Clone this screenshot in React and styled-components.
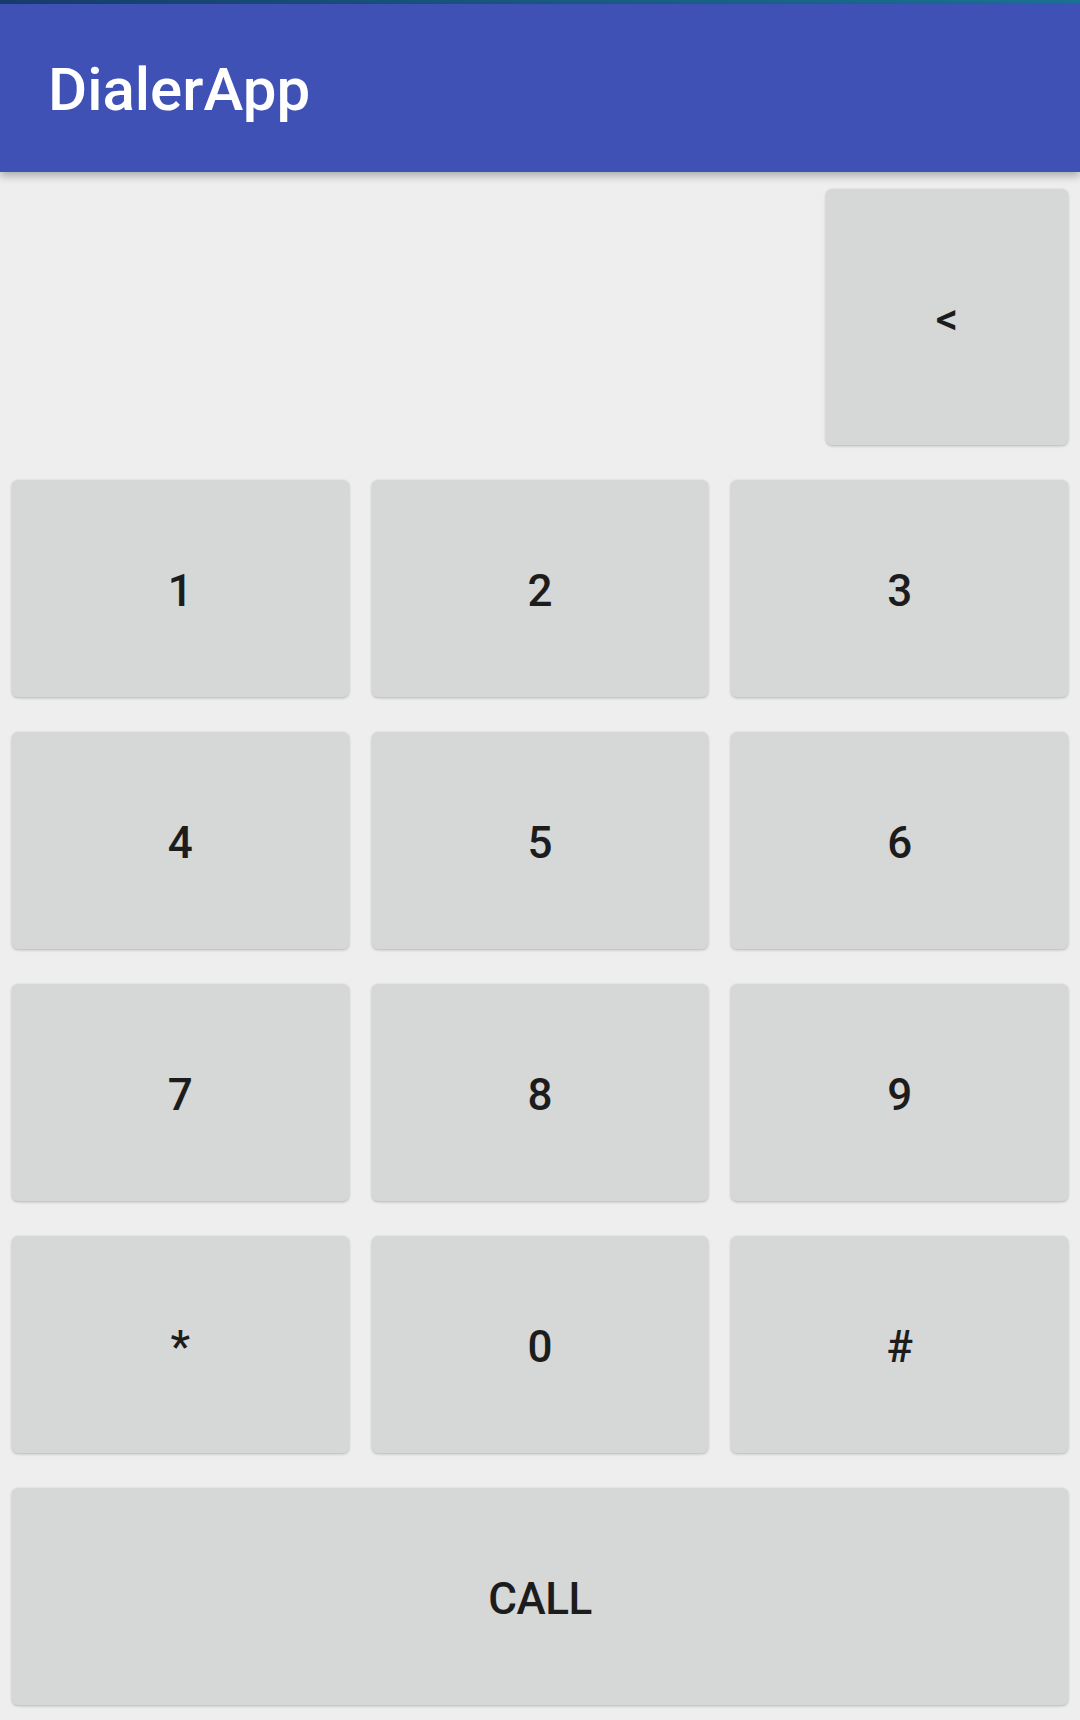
import React from 'react';
import styled, { createGlobalStyle } from 'styled-components';

const GlobalStyle = createGlobalStyle`
  html, body {
    margin: 0;
    padding: 0;
    background: #eeeeee;
    font-family: Roboto, 'Noto Sans', sans-serif;
  }
`;

const Screen = styled.div`
  width: 1080px;
  min-height: 1720px;
  background: #eeeeee;
  display: flex;
  flex-direction: column;
`;

const StatusStrip = styled.div`
  height: 4px;
  background: linear-gradient(90deg, #173d6e 0%, #1a5c86 55%, #1a7396 100%);
`;

const AppBar = styled.header`
  height: 168px;
  background: #3f51b5;
  display: flex;
  align-items: center;
  padding-left: 48px;
  padding-top: 2px;
  box-sizing: border-box;
  box-shadow: 0 4px 8px rgba(0, 0, 0, 0.28);
  position: relative;
  z-index: 1;
`;

const Title = styled.h1`
  margin: 0;
  color: #ffffff;
  font-size: 60px;
  font-weight: 500;
`;

const Body = styled.main`
  padding: 17px 12px 15px;
  display: flex;
  flex-direction: column;
  gap: 35px;
`;

const DisplayRow = styled.div`
  display: flex;
  justify-content: flex-end;
`;

const Pad = styled.div`
  display: grid;
  grid-template-columns: repeat(3, 1fr);
  grid-auto-rows: 217px;
  column-gap: 23px;
  row-gap: 35px;
`;

const Key = styled.button`
  border: none;
  border-radius: 6px;
  background: #d6d7d7;
  box-shadow: 0 1px 3px rgba(0, 0, 0, 0.25);
  color: #1c1c1c;
  font-family: Roboto, 'Noto Sans', sans-serif;
  font-size: 44px;
  font-weight: 500;
  display: flex;
  align-items: center;
  justify-content: center;
  padding: 4px 0 0;
  width: ${(p) => p.$width || 'auto'};
  height: ${(p) => p.$height || 'auto'};
  grid-column: ${(p) => (p.$wide ? '1 / -1' : 'auto')};
  letter-spacing: ${(p) => (p.$wide ? '-0.5px' : '0')};
`;

const keys = ['1', '2', '3', '4', '5', '6', '7', '8', '9', '*', '0', '#'];

export default function App() {
  return (
    <Screen>
      <GlobalStyle />
      <StatusStrip />
      <AppBar>
        <Title>DialerApp</Title>
      </AppBar>
      <Body>
        <DisplayRow>
          <Key $width="242px" $height="256px">&lt;</Key>
        </DisplayRow>
        <Pad>
          {keys.map((k) => (
            <Key key={k}>{k}</Key>
          ))}
          <Key $wide>CALL</Key>
        </Pad>
      </Body>
    </Screen>
  );
}
